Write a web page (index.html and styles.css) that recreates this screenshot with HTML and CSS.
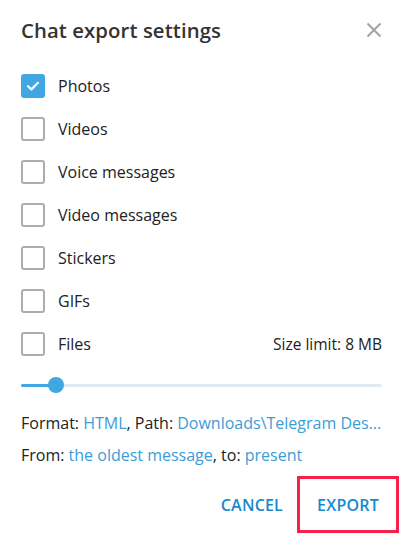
FILE: index.html
```html
<!DOCTYPE html>
<html>
<head>
<meta charset="utf-8">
<link rel="stylesheet" href="styles.css">
</head>
<body>
<div class="dialog">
  <div class="header">
    <div class="title">Chat export settings</div>
    <svg class="close" width="16" height="16" viewBox="0 0 16 16"><path d="M1.5 1.5 L14.5 14.5 M14.5 1.5 L1.5 14.5" stroke="#a3a3a3" stroke-width="2" fill="none"/></svg>
  </div>
  <div class="list">
    <div class="row"><span class="box checked"><svg width="14" height="12" viewBox="0 0 14 12"><path d="M2 6.2 L5.4 9.4 L12 2.8" stroke="#fff" stroke-width="2.2" fill="none" stroke-linecap="round" stroke-linejoin="round"/></svg></span><span class="label">Photos</span></div>
    <div class="row"><span class="box"></span><span class="label">Videos</span></div>
    <div class="row"><span class="box"></span><span class="label">Voice messages</span></div>
    <div class="row"><span class="box"></span><span class="label">Video messages</span></div>
    <div class="row"><span class="box"></span><span class="label">Stickers</span></div>
    <div class="row"><span class="box"></span><span class="label">GIFs</span></div>
    <div class="row"><span class="box"></span><span class="label">Files</span><span class="limit">Size limit: 8 MB</span></div>
  </div>
  <div class="slider">
    <div class="track"><div class="fill"></div><div class="thumb"></div></div>
  </div>
  <div class="info">
    <div class="line">Format: <span class="link">HTML</span>, Path: <span class="link">Downloads\Telegram Des...</span></div>
    <div class="line">From: <span class="link">the oldest message</span>, to: <span class="link">present</span></div>
  </div>
  <div class="buttons">
    <div class="btn cancel">CANCEL</div>
    <div class="btn export">EXPORT</div>
  </div>
</div>
</body>
</html>
```
FILE: styles.css
```css
html, body {
  margin: 0;
  padding: 0;
  background: #fff;
}
body {
  font-family: "Open Sans", "Noto Sans", sans-serif;
  color: #222;
  width: 400px;
  height: 535px;
  overflow: hidden;
}
.dialog {
  display: flex;
  flex-direction: column;
}
.header {
  display: flex;
  align-items: center;
  justify-content: space-between;
  padding: 14px 18px 0 21px;
  height: 32px;
}
.title {
  font-size: 20.3px;
  font-weight: 600;
  color: #333;
  line-height: 32px;
  letter-spacing: 0.1px;
}
.close {
  display: block;
}
.list {
  display: flex;
  flex-direction: column;
  padding: 18px 18px 0 21px;
}
.row {
  display: flex;
  align-items: center;
  height: 43px;
}
.box {
  width: 20px;
  height: 20px;
  border: 2px solid #adadad;
  border-radius: 3px;
  display: flex;
  align-items: center;
  justify-content: center;
  flex: none;
}
.box.checked {
  background: #40a7e3;
  border-color: #40a7e3;
}
.label {
  margin-left: 13px;
  font-size: 16px;
  color: #222;
}
.limit {
  margin-left: auto;
  font-size: 15.5px;
  color: #222;
}
.slider {
  padding: 0 18px 0 21px;
  height: 40px;
  display: flex;
  align-items: center;
}
.track {
  position: relative;
  width: 100%;
  height: 3px;
  border-radius: 2px;
  background: #e2eaf1;
}
.fill {
  width: 35px;
  height: 3px;
  border-radius: 2px;
  background: #40a7e3;
}
.thumb {
  position: absolute;
  left: 27px;
  top: -7px;
  width: 16px;
  height: 16px;
  border-radius: 50%;
  background: #40a7e3;
}
.info {
  padding: 2px 18px 0 21px;
  display: flex;
  flex-direction: column;
}
.line {
  font-size: 16px;
  line-height: 32px;
  color: #222;
  white-space: nowrap;
}
.link {
  color: #3a9dd8;
}
.buttons {
  display: flex;
  justify-content: flex-end;
  align-items: center;
  padding: 5px 1px 0 0;
}
.btn {
  font-size: 16px;
  font-weight: 600;
  color: #168acd;
  letter-spacing: 0.2px;
}
.cancel {
  padding: 0 14px 0 0;
}
.export {
  width: 96px;
  height: 51px;
  border: 3px solid #f5214b;
  display: flex;
  align-items: center;
  justify-content: center;
}
```
